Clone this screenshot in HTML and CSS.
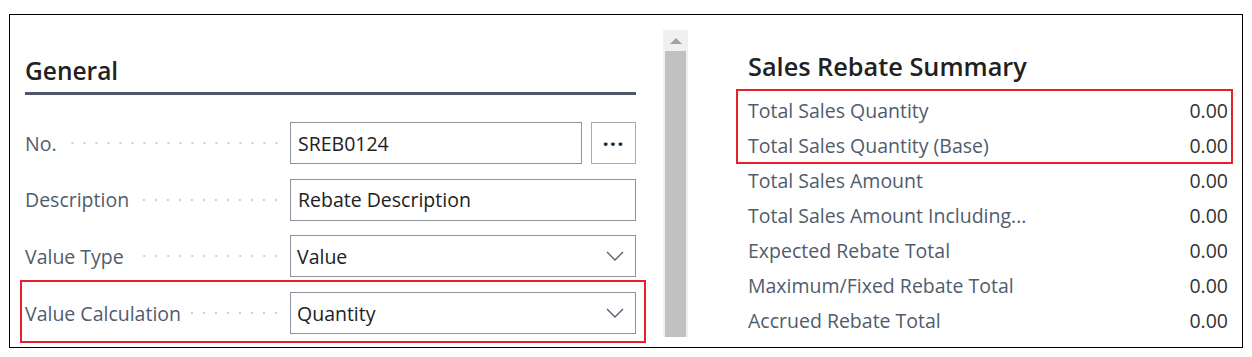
FILE: index.html
```html
<!DOCTYPE html>
<html lang="en">
<head>
  <meta charset="UTF-8" />
  <title>Sales Rebate</title>
  <link rel="stylesheet" href="styles.css">
</head>
<body>
  <div class="frame">

    <!-- GENERAL -->
    <div class="general">
      <h2 class="section-title">General</h2>

      <div class="field">
        <div class="label"><span>No.</span><span class="leader"></span></div>
        <div class="control">
          <div class="input">SREB0124</div>
          <div class="assist-btn">&middot;&middot;&middot;</div>
        </div>
      </div>

      <div class="field">
        <div class="label"><span>Description</span><span class="leader"></span></div>
        <div class="control">
          <div class="input">Rebate Description</div>
        </div>
      </div>

      <div class="field">
        <div class="label"><span>Value Type</span><span class="leader"></span></div>
        <div class="control">
          <div class="input select">
            <span>Value</span>
            <svg class="chevron" width="18" height="10" viewBox="0 0 18 10"><path d="M1 1 L9 9 L17 1" /></svg>
          </div>
        </div>
      </div>

      <div class="field marked">
        <div class="label"><span>Value Calculation</span><span class="leader"></span></div>
        <div class="control">
          <div class="input select">
            <span>Quantity</span>
            <svg class="chevron" width="18" height="10" viewBox="0 0 18 10"><path d="M1 1 L9 9 L17 1" /></svg>
          </div>
        </div>
        <div class="highlight left-box"></div>
      </div>
    </div>

    <!-- SCROLLBAR -->
    <div class="scrollbar">
      <div class="scroll-up"><span class="arrow"></span></div>
      <div class="thumb"></div>
    </div>

    <!-- SUMMARY -->
    <div class="summary">
      <h2 class="summary-title">Sales Rebate Summary</h2>
      <div class="rows">
        <div class="group">
          <div class="row"><span class="name">Total Sales Quantity</span><span class="val">0.00</span></div>
          <div class="row"><span class="name">Total Sales Quantity (Base)</span><span class="val">0.00</span></div>
          <div class="highlight right-box"></div>
        </div>
        <div class="row"><span class="name">Total Sales Amount</span><span class="val">0.00</span></div>
        <div class="row"><span class="name">Total Sales Amount Including...</span><span class="val">0.00</span></div>
        <div class="row"><span class="name">Expected Rebate Total</span><span class="val">0.00</span></div>
        <div class="row"><span class="name">Maximum/Fixed Rebate Total</span><span class="val">0.00</span></div>
        <div class="row"><span class="name">Accrued Rebate Total</span><span class="val">0.00</span></div>
      </div>
    </div>

  </div>
</body>
</html>
```

FILE: styles.css
```css
* {
  box-sizing: border-box;
}
body {
  margin: 0;
  background: #fff;
  font-family: 'Open Sans', 'Noto Sans', sans-serif;
  color: #212121;
}

.frame {
  margin: 14px 0 0 9px;
  width: 1234px;
  height: 334px;
  border: 1px solid #000;
  display: grid;
  grid-template-columns: 611px 52px 540px;
  padding-left: 15px;
}

/* General */
.general {
  padding-top: 40px;
}

.section-title {
  margin: 0;
  font-size: 24.5px;
  line-height: 32px;
  font-weight: 600;
  padding-bottom: 5px;
  border-bottom: 3px solid #4f5666;
}

.field {
  position: relative;
  display: grid;
  grid-template-columns: 265px 1fr;
  align-items: center;
  height: 42px;
  margin-top: 14.7px;
}

.field:first-of-type {
  margin-top: 27px;
}

.label {
  display: flex;
  align-items: center;
  font-size: 19.5px;
  color: #505c6d;
  padding-right: 8px;
}

.leader {
  flex: 1;
  height: 4px;
  margin-left: 10px;
  background-image: radial-gradient(circle, #cfcfcf 1.1px, transparent 1.4px);
  background-size: 12px 4px;
  background-position: right center;
  background-repeat: repeat-x;
}

.control {
  display: flex;
  gap: 9px;
  height: 42px;
}

.input {
  flex: 1;
  display: flex;
  align-items: center;
  justify-content: space-between;
  border: 1px solid #8f949c;
  padding: 0 7px;
  font-size: 19.5px;
  color: #212121;
}

.select {
  padding-left: 6px;
  padding-right: 11px;
}

.chevron path {
  fill: none;
  stroke: #505c6d;
  stroke-width: 1.3;
}

.assist-btn {
  width: 45px;
  border: 1px solid #ababab;
  display: flex;
  align-items: center;
  justify-content: center;
  font-size: 22px;
  font-weight: bold;
  letter-spacing: 1px;
  color: #1f2a44;
}

.highlight {
  position: absolute;
  border: 2px solid #e8202a;
}

.left-box {
  left: -5px;
  right: -10px;
  top: -12px;
  bottom: -9px;
}

/* Scrollbar */
.scrollbar {
  margin: 15px 0 10px 27px;
  width: 25px;
  background: #f0f0f0;
  display: flex;
  flex-direction: column;
}

.scroll-up {
  height: 21px;
  display: flex;
  justify-content: center;
  align-items: center;
}

.arrow {
  width: 0;
  height: 0;
  border-left: 6px solid transparent;
  border-right: 6px solid transparent;
  border-bottom: 6px solid #a3a3a3;
}

.thumb {
  flex: 1;
  margin: 0 2px;
  background: #c1c1c1;
}

/* Summary */
.summary {
  padding: 35px 0 0 60px;
}

.summary-title {
  margin: 0;
  font-size: 25.3px;
  line-height: 32px;
  font-weight: 600;
}

.rows {
  margin-top: 10.5px;
}

.group {
  position: relative;
}

.row {
  display: flex;
  justify-content: space-between;
  align-items: center;
  height: 35px;
  font-size: 19.5px;
}

.name {
  color: #505c6d;
}

.val {
  color: #333;
}

.right-box {
  left: -12px;
  right: -5px;
  top: -4px;
  bottom: -1px;
}
```
